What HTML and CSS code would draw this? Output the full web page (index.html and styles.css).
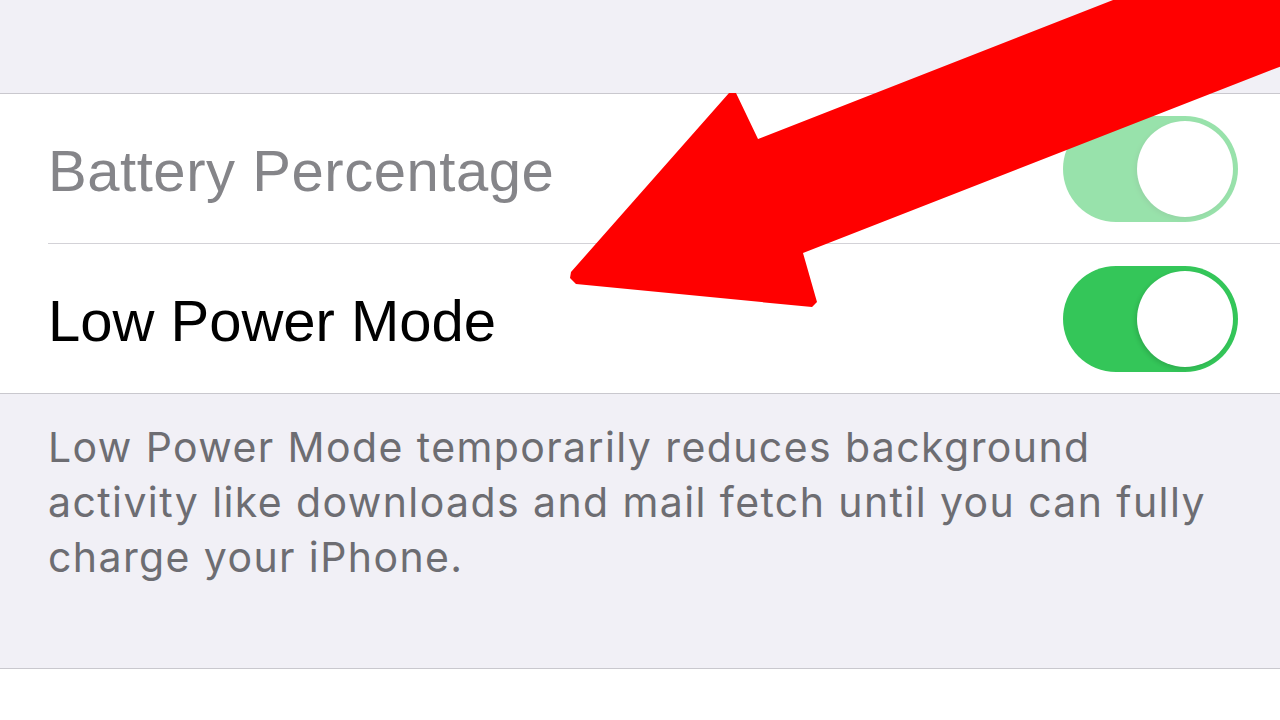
FILE: index.html
```html
<!DOCTYPE html>
<html>
<head>
    <title>Battery</title>
    <link rel="stylesheet" href="styles.css">
</head>
<body>

    <div class="screen">
        <div class="top-space"></div>

        <!-- Battery switches -->
        <div class="group">
            <div class="cell">
                <span class="label label-dimmed">Battery Percentage</span>
                <div class="switch switch-on switch-disabled"><div class="knob"></div></div>
            </div>
            <div class="cell">
                <span class="label">Low Power Mode</span>
                <div class="switch switch-on"><div class="knob"></div></div>
            </div>
        </div>

        <p class="footer-note">Low Power Mode temporarily reduces background activity like downloads and mail fetch until you can fully charge your iPhone.</p>

        <div class="group group-next">
            <div class="cell"></div>
        </div>

        <!-- red pointer drawn on top -->
        <svg class="pointer" width="1280" height="720" viewBox="0 0 1280 720">
            <polygon fill="#ff0000" points="729,93 736,93 758,139 1320,-81 1320,51 803,253 817,302 812,307 576,284 570,278 571,272"/>
        </svg>
    </div>

</body>
</html>
```

FILE: styles.css
```css
html, body {
    margin: 0;
    padding: 0;
}

body {
    font-family: 'Liberation Sans', Arial, sans-serif;
    background: #f1f0f6;
    overflow: hidden;
}

.screen {
    position: relative;
    width: 1280px;
    height: 720px;
    overflow: hidden;
}

.top-space {
    height: 93px;
}

.group {
    background: #ffffff;
    border-top: 1px solid #c9c8ce;
    border-bottom: 1px solid #c9c8ce;
}

.cell {
    position: relative;
    display: flex;
    align-items: center;
    justify-content: space-between;
    height: 149px;
    padding: 0 42px 0 48px;
}

.cell + .cell::before {
    content: "";
    position: absolute;
    top: -1px;
    left: 48px;
    right: 0;
    height: 1px;
    background: #d3d2d7;
}

.cell + .cell {
    margin-top: 1px;
}

.label {
    font-size: 58px;
    color: #000000;
    line-height: 1;
    padding-top: 4px;
}

.label-dimmed {
    color: #858589;
    letter-spacing: 0.55px;
}

.switch {
    position: relative;
    width: 175px;
    height: 106px;
    border-radius: 53px;
    background: #e5e5ea;
}

.switch-on {
    background: #34c659;
}

.switch-disabled {
    opacity: 0.5;
}

.knob {
    position: absolute;
    top: 5px;
    right: 5px;
    width: 96px;
    height: 96px;
    border-radius: 50%;
    background: #ffffff;
    box-shadow: -2px 2px 4px rgba(0, 0, 0, 0.12);
}

.footer-note {
    margin: 0;
    padding: 26px 50px 83px 48px;
    font-family: Inter, 'Liberation Sans', sans-serif;
    font-size: 41px;
    line-height: 55px;
    letter-spacing: 1.4px;
    color: #6d6d72;
}

.group-next .cell {
    height: 80px;
}

.pointer {
    position: absolute;
    top: 0;
    left: 0;
}
```
